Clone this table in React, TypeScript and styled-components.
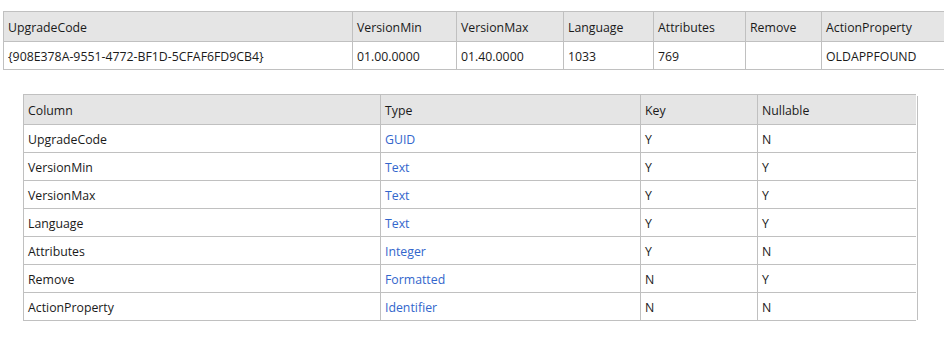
import React from "react";
import styled, { createGlobalStyle } from "styled-components";

const GlobalStyle = createGlobalStyle`
  html, body { margin: 0; padding: 0; background: #ffffff; }
  body { overflow: hidden; }
  * { box-sizing: border-box; }
`;

const Page = styled.div`
  width: 944px;
  height: 338px;
  overflow: hidden;
  padding: 11px 0 0 3px;
  display: flex;
  flex-direction: column;
  gap: 24px;
  font-family: "Open Sans", "Noto Sans", sans-serif;
  font-size: 12.3px;
  color: #1a1a1a;
`;

const Grid = styled.div<{ $cols: string }>`
  display: grid;
  grid-template-columns: ${(p) => p.$cols};
  border-top: 1px solid #c0c0c0;
  border-left: 1px solid #c0c0c0;
  width: max-content;
`;

const Cell = styled.div<{ $head?: boolean; $last?: boolean; $link?: boolean }>`
  display: flex;
  align-items: center;
  height: ${(p) => (p.$head ? 30 : 28)}px;
  padding: 1px 5px 0 4px;
  background: ${(p) => (p.$head ? "#e5e5e5" : "#ffffff")};
  border-bottom: 1px solid #c0c0c0;
  border-right: ${(p) => (p.$last ? "none" : "1px solid #c0c0c0")};
  color: ${(p) => (p.$link ? "#3366cc" : "#1a1a1a")};
  white-space: nowrap;
  overflow: hidden;
`;

const SchemaRow = styled.div`
  display: flex;
  margin-left: 20px;
`;

const SideRule = styled.div`
  width: 1px;
  margin: 2px 0 1px 1px;
  background: #c0c0c0;
`;

const dataHeaders = [
  "UpgradeCode",
  "VersionMin",
  "VersionMax",
  "Language",
  "Attributes",
  "Remove",
  "ActionProperty",
];
const dataRow = [
  "{908E378A-9551-4772-BF1D-5CFAF6FD9CB4}",
  "01.00.0000",
  "01.40.0000",
  "1033",
  "769",
  "",
  "OLDAPPFOUND",
];

const schema: [string, string, string, string][] = [
  ["UpgradeCode", "GUID", "Y", "N"],
  ["VersionMin", "Text", "Y", "Y"],
  ["VersionMax", "Text", "Y", "Y"],
  ["Language", "Text", "Y", "Y"],
  ["Attributes", "Integer", "Y", "N"],
  ["Remove", "Formatted", "N", "Y"],
  ["ActionProperty", "Identifier", "N", "N"],
];

export default function App() {
  return (
    <>
      <GlobalStyle />
      <Page>
        <Grid $cols="349px 104px 107px 90px 92px 76px 150px">
          {dataHeaders.map((h) => (
            <Cell key={h} $head>
              {h}
            </Cell>
          ))}
          {dataRow.map((v, i) => (
            <Cell key={i}>{v}</Cell>
          ))}
        </Grid>
        <SchemaRow>
          <Grid $cols="357px 260px 117px 158px">
            <Cell $head>Column</Cell>
            <Cell $head>Type</Cell>
            <Cell $head>Key</Cell>
            <Cell $head $last>
              Nullable
            </Cell>
            {schema.map(([c, t, k, n]) => (
              <React.Fragment key={c}>
                <Cell>{c}</Cell>
                <Cell $link>{t}</Cell>
                <Cell>{k}</Cell>
                <Cell $last>{n}</Cell>
              </React.Fragment>
            ))}
          </Grid>
          <SideRule />
        </SchemaRow>
      </Page>
    </>
  );
}
